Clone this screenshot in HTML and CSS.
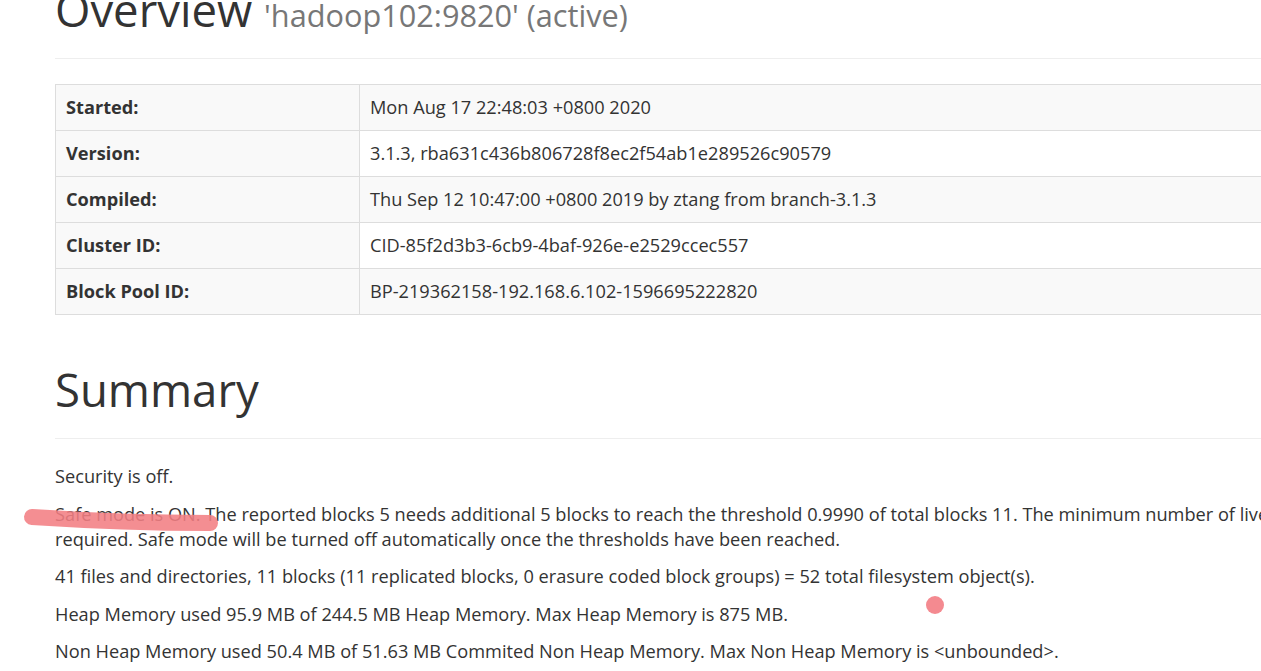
FILE: index.html
```html
<!DOCTYPE html>
<html>
<head>
<meta charset="utf-8">
<title>Namenode information</title>
<link rel="stylesheet" href="styles.css">
</head>
<body>
<div class="container">
  <div class="page-header first">
    <h1>Overview <small>'hadoop102:9820' (active)</small></h1>
  </div>
  <table class="table">
    <tbody>
      <tr><th>Started:</th><td>Mon Aug 17 22:48:03 +0800 2020</td></tr>
      <tr><th>Version:</th><td>3.1.3, rba631c436b806728f8ec2f54ab1e289526c90579</td></tr>
      <tr><th>Compiled:</th><td>Thu Sep 12 10:47:00 +0800 2019 by ztang from branch-3.1.3</td></tr>
      <tr><th>Cluster ID:</th><td>CID-85f2d3b3-6cb9-4baf-926e-e2529ccec557</td></tr>
      <tr><th>Block Pool ID:</th><td>BP-219362158-192.168.6.102-1596695222820</td></tr>
    </tbody>
  </table>
  <div class="page-header">
    <h1>Summary</h1>
  </div>
  <p>Security is off.</p>
  <p class="safemode">Safe mode is ON. The reported blocks 5 needs additional 5 blocks to reach the threshold 0.9990 of total blocks 11. The minimum number of live datanodes is not<br>required. Safe mode will be turned off automatically once the thresholds have been reached.</p>
  <p>41 files and directories, 11 blocks (11 replicated blocks, 0 erasure coded block groups) = 52 total filesystem object(s).</p>
  <p>Heap Memory used 95.9 MB of 244.5 MB Heap Memory. Max Heap Memory is 875 MB.</p>
  <p>Non Heap Memory used 50.4 MB of 51.63 MB Commited Non Heap Memory. Max Non Heap Memory is &lt;unbounded&gt;.</p>
</div>
<svg class="mark-stroke" width="210" height="26" viewBox="0 0 210 26"><path d="M14 12 C 60 15, 130 18, 192 18" stroke="#f27e83" stroke-opacity="0.88" stroke-width="16" stroke-linecap="round" fill="none"/></svg>
<div class="mark-dot"></div>
</body>
</html>
```
FILE: styles.css
```css
html, body {
  margin: 0;
  padding: 0;
  overflow: hidden;
  background: #fff;
}
body {
  font-family: "Open Sans", "Noto Sans", sans-serif;
  font-size: 18.2px;
  line-height: 25px;
  color: #333;
  width: 1600px;
}
.container {
  width: 1425px;
  padding: 0 18.75px 0 55px;
}
.page-header {
  margin: 50px 0 25px;
  padding-bottom: 11.25px;
  border-bottom: 1px solid #eee;
}
.page-header.first {
  margin-top: -15.25px;
}
h1 {
  font-size: 45.5px;
  line-height: 49.5px;
  font-weight: 400;
  margin: 0 0 12.5px;
  color: #333;
}
h1 small {
  font-size: 30.7px;
  color: #777;
  font-weight: 400;
  line-height: 1;
}
.table {
  width: 100%;
  border-collapse: collapse;
  border: 1px solid #ddd;
  margin-bottom: 25px;
}
.table th, .table td {
  border: 1px solid #ddd;
  padding: 10px;
  line-height: 25px;
  text-align: left;
  vertical-align: top;
}
.table th {
  width: 283px;
  background: #f9f9f9;
  font-weight: 700;
}
.table tr:nth-child(odd) td {
  background: #f9f9f9;
}
p {
  margin: 0 0 12.5px;
}
.safemode {
  white-space: nowrap;
}
.mark-stroke {
  position: absolute;
  left: 18px;
  top: 505px;
}
.mark-dot {
  position: absolute;
  left: 926px;
  top: 596px;
  width: 18px;
  height: 18px;
  border-radius: 50%;
  background: #f48a90;
}
```
